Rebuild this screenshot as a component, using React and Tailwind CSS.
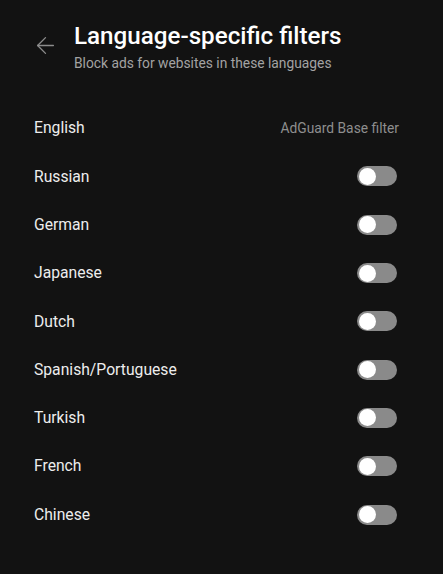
import { ArrowLeft } from "lucide-react";

const languages = [
  "Russian",
  "German",
  "Japanese",
  "Dutch",
  "Spanish/Portuguese",
  "Turkish",
  "French",
  "Chinese",
];

function Toggle() {
  return (
    <div className="w-[40px] h-[20px] rounded-full bg-[#8a8a8a] flex items-center px-[1.5px] mr-[2px]">
      <div className="w-[17px] h-[17px] rounded-full bg-white" />
    </div>
  );
}

export default function App() {
  return (
    <div
      className="w-[443px] h-[574px] bg-[#121212] text-white overflow-hidden"
      style={{ fontFamily: "Roboto, 'Noto Sans', sans-serif" }}
    >
      {/* Header */}
      <div className="flex items-start pt-[22px] pl-[32px]">
        <ArrowLeft size={27} strokeWidth={1.2} className="text-[#8c8c8c] mt-[9.5px] shrink-0" />
        <div className="ml-[15px]">
          <div className="text-[24.2px] leading-[28px] font-medium text-white">
            Language-specific filters
          </div>
          <div className="text-[13.8px] leading-[20px] text-[#a3a3a3] mt-[3px]">
            Block ads for websites in these languages
          </div>
        </div>
      </div>

      {/* List */}
      <div className="mt-[31px] pl-[34px] pr-[44px]">
        <div className="h-[48.3px] flex items-center justify-between">
          <span className="text-[15.7px] text-[#ededed]">English</span>
          <span className="text-[13.8px] text-[#8e8e8e]">AdGuard Base filter</span>
        </div>
        {languages.map((lang) => (
          <div key={lang} className="h-[48.3px] flex items-center justify-between">
            <span className="text-[15.7px] text-[#ededed]">{lang}</span>
            <Toggle />
          </div>
        ))}
      </div>
    </div>
  );
}
